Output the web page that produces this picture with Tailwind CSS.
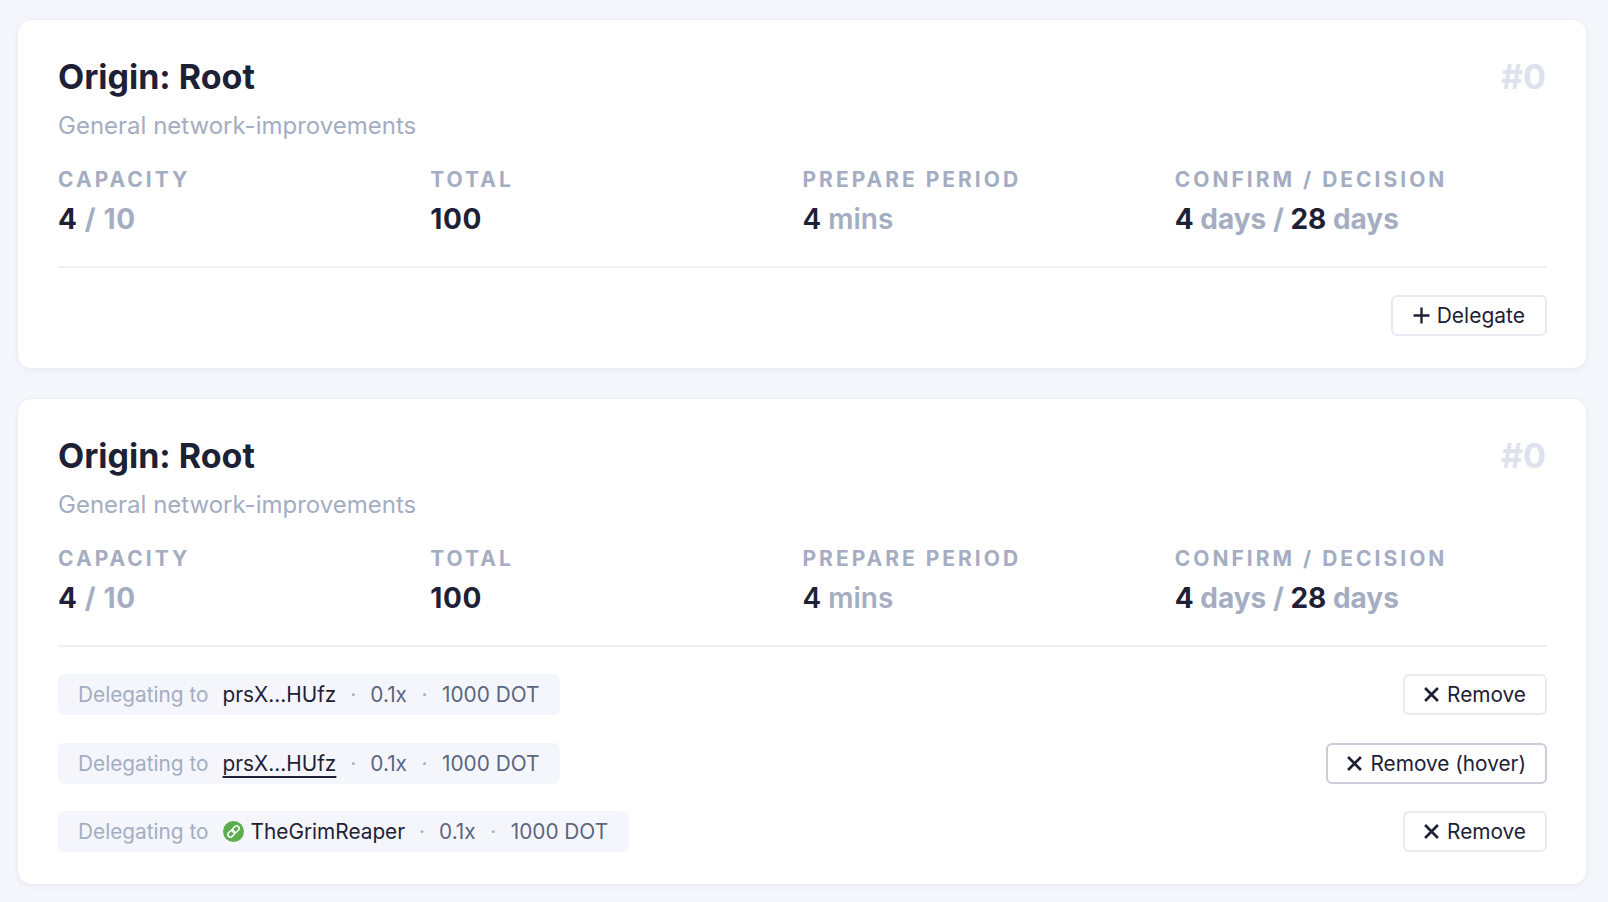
<!DOCTYPE html>
<html lang="en">
<head>
  <meta charset="UTF-8" />
  <title>Delegations</title>
  <script src="https://cdn.jsdelivr.net/npm/@tailwindcss/browser@4"></script>
</head>
<body class="bg-[#f5f6fb] font-['Inter',sans-serif] text-[#1e2136] overflow-hidden">
  <div class="h-[902px] pl-[17px] pr-[21px] pt-[19px] flex flex-col gap-[29px]">

    <!-- card without delegation -->
    <section class="h-[350px] bg-white rounded-[14px] border border-[#eceef4] shadow-[0_2px_6px_rgba(30,33,54,0.04)] pl-[40px] pr-[39px]">
      <div class="flex justify-between items-center h-[40px] mt-[36px]">
        <h2 class="text-[34px] font-bold">Origin: Root</h2>
        <span class="text-[34px] font-bold text-[#dde2ec] mr-[1px]">#0</span>
      </div>
      <p class="text-[24px] leading-[32px] mt-[14px] text-[#a4adc1]">General network-improvements</p>
      <div class="grid grid-cols-4 mt-[24px]">
        <div>
          <div class="text-[21px] leading-[28px] font-bold tracking-[3px] text-[#a4adc1]">CAPACITY</div>
          <div class="text-[28px] leading-[36px] mt-[7px] font-bold tracking-[0.6px] text-[#a4adc1]"><span class="text-[#1e2136]">4</span> / 10</div>
        </div>
        <div>
          <div class="text-[21px] leading-[28px] font-bold tracking-[3px] text-[#a4adc1]">TOTAL</div>
          <div class="text-[28px] leading-[36px] mt-[7px] font-bold tracking-[0.6px] text-[#1e2136]">100</div>
        </div>
        <div>
          <div class="text-[21px] leading-[28px] font-bold tracking-[3px] text-[#a4adc1]">PREPARE PERIOD</div>
          <div class="text-[28px] leading-[36px] mt-[7px] font-semibold text-[#a4adc1]"><span class="text-[#1e2136]">4</span> mins</div>
        </div>
        <div>
          <div class="text-[21px] leading-[28px] font-bold tracking-[3px] text-[#a4adc1]">CONFIRM / DECISION</div>
          <div class="text-[28px] leading-[36px] mt-[7px] font-bold text-[#a4adc1]"><span class="text-[#1e2136]">4</span> days / <span class="text-[#1e2136]">28</span> days</div>
        </div>
      </div>
      <div class="border-t-2 border-[#f0f1f6] mt-[29px]"></div>
      <div class="flex justify-end mt-[27px]">
        <button class="h-[41px] px-[20px] flex items-center gap-[7px] bg-white rounded-[6px] border-2 border-[#e8eaf2] text-[21px]">
          <svg class="w-[17px] h-[17px]" viewBox="0 0 16 16" fill="none" stroke="#1e2136" stroke-width="2.2"><path d="M8 .5v15M.5 8h15"/></svg>
          Delegate
        </button>
      </div>
    </section>

    <!-- card with delegations -->
    <section class="h-[487px] bg-white rounded-[14px] border border-[#eceef4] shadow-[0_2px_6px_rgba(30,33,54,0.04)] pl-[40px] pr-[39px]">
      <div class="flex justify-between items-center h-[40px] mt-[36px]">
        <h2 class="text-[34px] font-bold">Origin: Root</h2>
        <span class="text-[34px] font-bold text-[#dde2ec] mr-[1px]">#0</span>
      </div>
      <p class="text-[24px] leading-[32px] mt-[14px] text-[#a4adc1]">General network-improvements</p>
      <div class="grid grid-cols-4 mt-[24px]">
        <div>
          <div class="text-[21px] leading-[28px] font-bold tracking-[3px] text-[#a4adc1]">CAPACITY</div>
          <div class="text-[28px] leading-[36px] mt-[7px] font-bold tracking-[0.6px] text-[#a4adc1]"><span class="text-[#1e2136]">4</span> / 10</div>
        </div>
        <div>
          <div class="text-[21px] leading-[28px] font-bold tracking-[3px] text-[#a4adc1]">TOTAL</div>
          <div class="text-[28px] leading-[36px] mt-[7px] font-bold tracking-[0.6px] text-[#1e2136]">100</div>
        </div>
        <div>
          <div class="text-[21px] leading-[28px] font-bold tracking-[3px] text-[#a4adc1]">PREPARE PERIOD</div>
          <div class="text-[28px] leading-[36px] mt-[7px] font-semibold text-[#a4adc1]"><span class="text-[#1e2136]">4</span> mins</div>
        </div>
        <div>
          <div class="text-[21px] leading-[28px] font-bold tracking-[3px] text-[#a4adc1]">CONFIRM / DECISION</div>
          <div class="text-[28px] leading-[36px] mt-[7px] font-bold text-[#a4adc1]"><span class="text-[#1e2136]">4</span> days / <span class="text-[#1e2136]">28</span> days</div>
        </div>
      </div>
      <div class="border-t-2 border-[#f0f1f6] mt-[29px]"></div>

      <div class="flex flex-col gap-[27.6px] mt-[27px]">
        <div class="flex justify-between items-center">
          <div class="h-[41px] pl-[20px] pr-[21px] flex items-center bg-[#f5f6fb] rounded-[6px] text-[20.8px] text-[#5a6680]">
            <span class="text-[#a4adc1] mr-[14px]">Delegating to</span>
            <span class="text-[#1e2136]">prsX...HUfz</span>
            <span class="text-[#a4adc1] mx-[14px]">·</span>0.1x<span class="text-[#a4adc1] mx-[14.5px]">·</span>1000 DOT
          </div>
          <button class="h-[41px] px-[19px] flex items-center gap-[8px] bg-white rounded-[6px] border-2 border-[#e8eaf2] text-[20.8px]">
            <svg class="w-[15px] h-[15px]" viewBox="0 0 14 14" fill="none" stroke="#1e2136" stroke-width="2.5"><path d="M1 1l12 12M13 1L1 13"/></svg>
            Remove
          </button>
        </div>
        <div class="flex justify-between items-center">
          <div class="h-[41px] pl-[20px] pr-[21px] flex items-center bg-[#f5f6fb] rounded-[6px] text-[20.8px] text-[#5a6680]">
            <span class="text-[#a4adc1] mr-[14px]">Delegating to</span>
            <span class="text-[#1e2136] underline underline-offset-[5px] decoration-2">prsX...HUfz</span>
            <span class="text-[#a4adc1] mx-[14px]">·</span>0.1x<span class="text-[#a4adc1] mx-[14.5px]">·</span>1000 DOT
          </div>
          <button class="h-[41px] px-[19px] flex items-center gap-[8px] bg-white rounded-[6px] border-2 border-[#c9cddc] text-[20.8px]">
            <svg class="w-[15px] h-[15px]" viewBox="0 0 14 14" fill="none" stroke="#1e2136" stroke-width="2.5"><path d="M1 1l12 12M13 1L1 13"/></svg>
            Remove (hover)
          </button>
        </div>
        <div class="flex justify-between items-center">
          <div class="h-[41px] pl-[20px] pr-[21px] flex items-center bg-[#f5f6fb] rounded-[6px] text-[20.8px] text-[#5a6680]">
            <span class="text-[#a4adc1] mr-[14px]">Delegating to</span>
            <svg class="w-[21px] h-[21px] mr-[7px]" viewBox="0 0 21 21" fill="none">
              <circle cx="10.5" cy="10.5" r="10.5" fill="#5cad4e"/>
              <g transform="rotate(-45 10.5 10.5)" stroke="#fff" stroke-width="1.5">
                <rect x="3.6" y="8" width="7.6" height="5" rx="2.5"/>
                <rect x="9.8" y="8" width="7.6" height="5" rx="2.5"/>
              </g>
            </svg>
            <span class="text-[#1e2136]">TheGrimReaper</span>
            <span class="text-[#a4adc1] mx-[14px]">·</span>0.1x<span class="text-[#a4adc1] mx-[14.5px]">·</span>1000 DOT
          </div>
          <button class="h-[41px] px-[19px] flex items-center gap-[8px] bg-white rounded-[6px] border-2 border-[#e8eaf2] text-[20.8px]">
            <svg class="w-[15px] h-[15px]" viewBox="0 0 14 14" fill="none" stroke="#1e2136" stroke-width="2.5"><path d="M1 1l12 12M13 1L1 13"/></svg>
            Remove
          </button>
        </div>
      </div>
    </section>
  </div>
</body>
</html>
